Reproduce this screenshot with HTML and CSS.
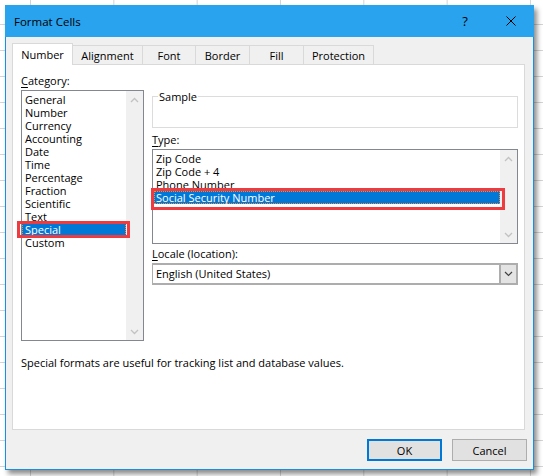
FILE: index.html
```html
<!DOCTYPE html>
<html lang="en">
<head>
<meta charset="utf-8">
<title>Format Cells</title>
<link rel="stylesheet" href="styles.css">
</head>
<body>
<div class="dialog">
  <div class="titlebar">
    <span class="title">Format Cells</span>
    <div class="tb-buttons">
      <span class="tb-btn tb-help">?</span>
      <span class="tb-btn tb-close"><svg width="10" height="10" viewBox="0 0 10 10"><path d="M0.5 0.5 L9.5 9.5 M9.5 0.5 L0.5 9.5" stroke="#000" stroke-width="1" fill="none"/></svg></span>
    </div>
  </div>
  <div class="body">
    <div class="tabs">
      <div class="tab tab-active tab-number">Number</div>
      <div class="tab tab-alignment">Alignment</div>
      <div class="tab tab-font">Font</div>
      <div class="tab tab-border">Border</div>
      <div class="tab tab-fill">Fill</div>
      <div class="tab tab-protection">Protection</div>
    </div>
    <div class="panel">
      <div class="cols">
        <div class="col-left">
          <div class="label"><span class="ak">C</span>ategory:</div>
          <div class="listbox listbox-cat">
            <div class="items">
              <div class="item">General</div>
              <div class="item">Number</div>
              <div class="item">Currency</div>
              <div class="item">Accounting</div>
              <div class="item">Date</div>
              <div class="item">Time</div>
              <div class="item">Percentage</div>
              <div class="item">Fraction</div>
              <div class="item">Scientific</div>
              <div class="item">Text</div>
              <div class="item item-selected">Special<span class="mark mark-cat"></span></div>
              <div class="item">Custom</div>
            </div>
            <div class="vscroll">
              <span class="arrow"><svg width="9" height="6" viewBox="0 0 9 6"><path d="M1 5 L4.5 1.5 L8 5" stroke="#c2c2c2" stroke-width="1.3" fill="none"/></svg></span>
              <span class="arrow"><svg width="9" height="6" viewBox="0 0 9 6"><path d="M1 1 L4.5 4.5 L8 1" stroke="#c2c2c2" stroke-width="1.3" fill="none"/></svg></span>
            </div>
          </div>
        </div>
        <div class="col-right">
          <div class="group">
            <span class="group-label">Sample</span>
          </div>
          <div class="label label-type"><span class="ak">T</span>ype:</div>
          <div class="listbox listbox-type">
            <div class="items">
              <div class="item">Zip Code</div>
              <div class="item">Zip Code + 4</div>
              <div class="item">Phone Number</div>
              <div class="item item-selected">Social Security Number<span class="mark mark-type"></span></div>
            </div>
            <div class="vscroll">
              <span class="arrow"><svg width="9" height="6" viewBox="0 0 9 6"><path d="M1 5 L4.5 1.5 L8 5" stroke="#c2c2c2" stroke-width="1.3" fill="none"/></svg></span>
              <span class="arrow"><svg width="9" height="6" viewBox="0 0 9 6"><path d="M1 1 L4.5 4.5 L8 1" stroke="#c2c2c2" stroke-width="1.3" fill="none"/></svg></span>
            </div>
          </div>
          <div class="label label-locale"><span class="ak">L</span>ocale (location):</div>
          <div class="combo">
            <span class="combo-text">English (United States)</span>
            <span class="combo-btn"><svg width="9" height="6" viewBox="0 0 9 6"><path d="M1 1 L4.5 4.5 L8 1" stroke="#404040" stroke-width="1.2" fill="none"/></svg></span>
          </div>
        </div>
      </div>
      <div class="desc">Special formats are useful for tracking list and database values.</div>
    </div>
    <div class="buttons">
      <button class="btn btn-default">OK</button>
      <button class="btn">Cancel</button>
    </div>
  </div>
</div>
</body>
</html>
```

FILE: styles.css
```css
html {
  background: #fff;
}
body {
  margin: 0;
  width: 543px;
  height: 476px;
  overflow: hidden;
  font-family: "Segoe UI", "Open Sans", sans-serif;
  font-size: 11px;
  color: #000;
  background-color: #fff;
  background-image:
    linear-gradient(to right, #d4d4d4 1px, transparent 1px),
    linear-gradient(to bottom, #d4d4d4 1px, transparent 1px);
  background-size: 83.33px 100%, 100% 26px;
  background-position: 30px 0, 0 24px;
}

.dialog {
  margin: 5px 0 0 5px;
  width: 529px;
  height: 465px;
  box-sizing: border-box;
  border: 1px solid #1c8ee0;
  border-top: none;
  background: #f0f0f0;
  box-shadow: 3px 4px 5px rgba(0, 0, 0, 0.45);
  display: flex;
  flex-direction: column;
}

.titlebar {
  height: 32px;
  margin: 0 -1px;
  background: #2aa3ee;
  display: flex;
  align-items: center;
  justify-content: space-between;
  flex-shrink: 0;
}
.title {
  padding-left: 9px;
  font-size: 11.5px;
}
.tb-buttons {
  display: flex;
  height: 100%;
}
.tb-btn {
  width: 46px;
  height: 100%;
  display: flex;
  align-items: center;
  justify-content: center;
}
.tb-help {
  font-size: 13px;
  padding-bottom: 1px;
  box-sizing: border-box;
}

.body {
  flex: 1;
  padding: 6px 8px 0 6px;
  display: flex;
  flex-direction: column;
}

.tabs {
  display: flex;
  align-items: flex-end;
  height: 22px;
  margin-bottom: -1px;
  position: relative;
  z-index: 1;
}
.tab {
  box-sizing: border-box;
  height: 19px;
  margin-bottom: 1px;
  border: 1px solid #d9d9d9;
  border-bottom: none;
  background: #f0f0f0;
  display: flex;
  align-items: center;
  justify-content: center;
  padding-top: 1px;
  margin-left: -1px;
}
.tab-active {
  height: 22px;
  margin-bottom: 0;
  margin-left: 0;
  background: #fff;
  padding-top: 0;
  padding-bottom: 1px;
  position: relative;
  z-index: 2;
}
.tab-number { width: 61px; }
.tab-alignment { width: 71px; }
.tab-font { width: 54px; }
.tab-border { width: 55px; }
.tab-fill { width: 55px; }
.tab-protection { width: 71px; }

.panel {
  width: 513px;
  height: 366px;
  box-sizing: border-box;
  border: 1px solid #d9d9d9;
  background: #fff;
  padding: 8px 6px 0 8px;
  display: flex;
  flex-direction: column;
}

.cols {
  display: flex;
  gap: 8px;
}
.col-left {
  width: 123px;
  display: flex;
  flex-direction: column;
}
.col-right {
  width: 366px;
  display: flex;
  flex-direction: column;
}

.label {
  line-height: 16px;
  height: 16px;
  margin-bottom: 1px;
  white-space: nowrap;
}
.ak {
  text-decoration: underline;
  text-underline-offset: 2px;
}
.label-type {
  margin-top: 4px;
}
.label-locale {
  margin-top: 2px;
}

.listbox {
  box-sizing: border-box;
  border: 1px solid #828790;
  background: #fff;
  display: flex;
}
.listbox-cat {
  height: 251px;
}
.listbox-type {
  height: 95px;
}
.items {
  flex: 1;
  padding-top: 2px;
  min-width: 0;
}
.item {
  height: 13px;
  line-height: 13px;
  padding-left: 3px;
  white-space: nowrap;
  position: relative;
}
.item-selected {
  background: #0078d7;
  color: #fff;
  outline: 1px dotted #ff8728;
  outline-offset: -1px;
}
.listbox-type .item-selected {
  margin-left: 1px;
  padding-left: 2px;
}

.vscroll {
  width: 17px;
  background: #f0f0f0;
  display: flex;
  flex-direction: column;
  justify-content: space-between;
}
.arrow {
  height: 17px;
  display: flex;
  align-items: center;
  justify-content: center;
}

.mark {
  position: absolute;
  border: 3px solid #ee3b3f;
  box-sizing: border-box;
  pointer-events: none;
}
.mark-cat {
  left: -5px;
  top: -2px;
  width: 113px;
  height: 17px;
}
.mark-type {
  left: -3px;
  top: -3px;
  width: 354px;
  height: 22px;
}

.group {
  margin-top: 23px;
  height: 32px;
  box-sizing: border-box;
  border: 1px solid #dcdcdc;
}
.group-label {
  display: inline-block;
  margin-top: -8px;
  margin-left: 5px;
  padding: 0 1px;
  line-height: 16px;
  background: #fff;
  vertical-align: top;
}

.combo {
  height: 22px;
  box-sizing: border-box;
  border: 2px solid #adadad;
  border-left-width: 1px;
  background: #fff;
  display: flex;
  align-items: stretch;
}
.combo-text {
  flex: 1;
  padding-left: 3px;
  line-height: 18px;
}
.combo-btn {
  width: 15px;
  background: #e3e3e3;
  border-left: 2px solid #adadad;
  display: flex;
  align-items: center;
  justify-content: center;
}

.desc {
  margin-top: 14px;
  line-height: 16px;
}

.buttons {
  display: flex;
  justify-content: flex-end;
  gap: 10px;
  margin-top: 9px;
  margin-right: -2px;
}
.btn {
  width: 75px;
  height: 22px;
  box-sizing: border-box;
  border: 1px solid #adadad;
  background: #e1e1e1;
  font: inherit;
  color: #000;
  padding: 0;
}
.btn-default {
  border: 2px solid #0078d7;
}
```
